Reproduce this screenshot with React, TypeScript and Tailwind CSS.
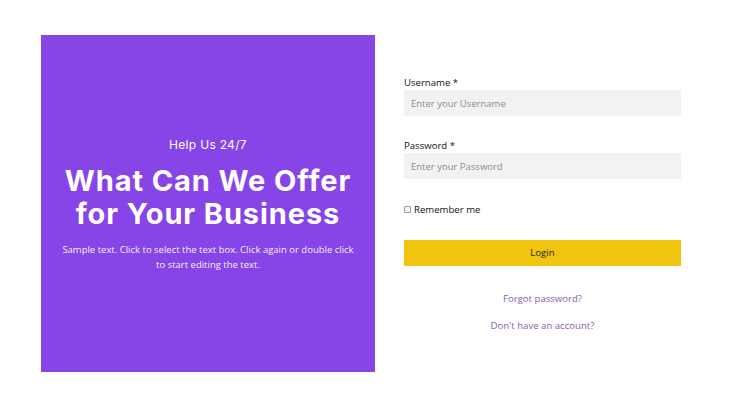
import React from 'react';

const App: React.FC = () => {
  return (
    <div className="w-[750px] h-[408px] bg-white flex pt-[35px] pl-[41px]" style={{ fontFamily: '"Open Sans", sans-serif' }}>
      {/* Promo panel */}
      <div className="w-[334px] h-[337px] bg-[#8745e7] flex flex-col items-center justify-center text-white text-center px-[20px]">
        <p className="text-[12px] leading-[18px] mb-[10px] tracking-[0.3px]" style={{ fontFamily: 'Inter, sans-serif' }}>Help Us 24/7</p>
        <h1 className="text-[29px] leading-[33px] font-bold mb-[12px] tracking-[0.9px] whitespace-nowrap" style={{ fontFamily: 'Inter, sans-serif' }}>
          What Can We Offer<br />for Your Business
        </h1>
        <p className="text-[9.5px] leading-[15px] text-white/95">
          Sample text. Click to select the text box. Click again or double click to start editing the text.
        </p>
      </div>

      {/* Login form */}
      <form className="w-[277px] ml-[29px] pt-[40px] flex flex-col">
        <label className="text-[9.6px] leading-[15px] text-[#111]">Username *</label>
        <input
          className="h-[26px] bg-[#f2f2f2] px-[7px] text-[9.5px] placeholder:text-[#8d8d8d] outline-none"
          placeholder="Enter your Username"
        />
        <label className="text-[9.6px] leading-[15px] text-[#111] mt-[22px]">Password *</label>
        <input
          type="password"
          className="h-[26px] bg-[#f2f2f2] px-[7px] text-[9.5px] placeholder:text-[#8d8d8d] outline-none"
          placeholder="Enter your Password"
        />
        <label className="flex items-center gap-[3px] mt-[23px] text-[9.6px] leading-[15px] text-[#111]">
          <input type="checkbox" className="appearance-none w-[7px] h-[7px] m-0 border border-[#9a9a9a] rounded-[1px] bg-[#f4f4f4]" />
          Remember me
        </label>
        <button type="button" className="mt-[23px] h-[26px] bg-[#f1c40f] text-[9.6px] text-[#222]">
          Login
        </button>
        <a className="mt-[25px] text-center text-[9.6px] leading-[15px] text-[#8a5cb5]">Forgot password?</a>
        <a className="mt-[12px] text-center text-[9.6px] leading-[15px] text-[#8a5cb5]">Don't have an account?</a>
      </form>
    </div>
  );
};

export default App;
